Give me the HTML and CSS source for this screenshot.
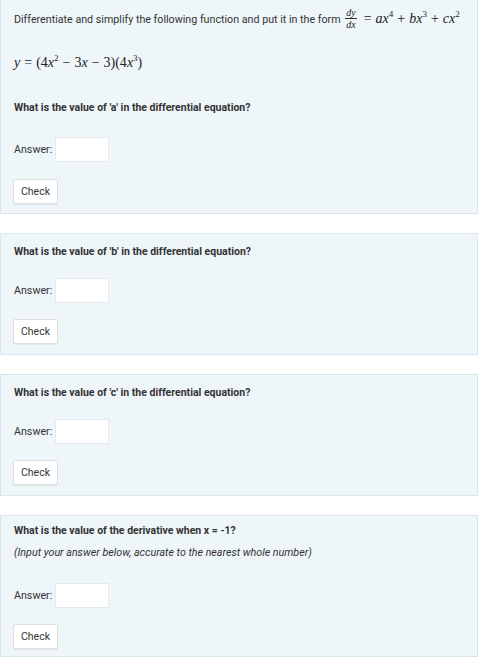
FILE: index.html
```html
<!DOCTYPE html>
<html>
<head>
<meta charset="utf-8">
<link rel="stylesheet" href="styles.css">
</head>
<body>
<div class="panel first">
  <p class="intro">Differentiate and simplify the following function and put it in the form
    <span class="math"><span class="frac"><span class="num"><i>dy</i></span><span class="den"><i>dx</i></span></span><span class="op eq">=</span><i>ax</i><sup>4</sup><span class="op">+</span><i>bx</i><sup>3</sup><span class="op">+</span><i>cx</i><sup>2</sup></span>
  </p>
  <p class="equation"><span class="math"><i>y</i><span class="op">=</span>(4<i>x</i><sup>2</sup><span class="op">−</span>3<i>x</i><span class="op">−</span>3)(4<i>x</i><sup>3</sup>)</span></p>
  <p class="question">What is the value of 'a' in the differential equation?</p>
  <div class="answer-row"><span class="label">Answer:</span><span class="input"></span></div>
  <button class="check">Check</button>
</div>
<div class="panel">
  <p class="question">What is the value of 'b' in the differential equation?</p>
  <div class="answer-row"><span class="label">Answer:</span><span class="input"></span></div>
  <button class="check">Check</button>
</div>
<div class="panel">
  <p class="question">What is the value of 'c' in the differential equation?</p>
  <div class="answer-row"><span class="label">Answer:</span><span class="input"></span></div>
  <button class="check">Check</button>
</div>
<div class="panel last">
  <p class="question">What is the value of the derivative when x = -1?</p>
  <p class="note">(Input your answer below, accurate to the nearest whole number)</p>
  <div class="answer-row"><span class="label">Answer:</span><span class="input"></span></div>
  <button class="check">Check</button>
</div>
</body>
</html>
```

FILE: styles.css
```css
body {
  margin: 0;
  background: #ffffff;
  font-family: Roboto, "Liberation Sans", sans-serif;
  font-size: 10.7px;
  color: #333333;
}
.panel {
  width: 451px;
  background: #eef6f9;
  border: 1px solid #d8e7ed;
  padding: 9px 12px 10px 13px;
  margin-bottom: 19px;
  display: flex;
  flex-direction: column;
  align-items: flex-start;
}
.panel.first {
  border-top: none;
  padding-top: 6px;
  padding-bottom: 9px;
}
p { margin: 0; }
.intro {
  line-height: 26px;
  height: 26px;
  white-space: nowrap;
}
.equation {
  margin-top: 21px;
  line-height: 20px;
}
.first .question { margin-top: 25px; }
.first .answer-row { margin-top: 20px; }
.first .check { margin-top: 17px; }
.question {
  font-weight: bold;
  font-size: 10.5px;
  line-height: 18px;
}
.note {
  font-style: italic;
  line-height: 18px;
  margin-top: 4px;
}
.math {
  font-family: "Liberation Serif", "DejaVu Serif", serif;
  font-size: 14px;
  color: #222;
}
.math i { font-style: italic; }
.math sup { font-size: 9px; vertical-align: 6px; line-height: 0; }
.op { margin: 0 4px; }
.op.eq { margin-left: 7px; }
.frac {
  display: inline-flex;
  flex-direction: column;
  align-items: center;
  vertical-align: middle;
  font-size: 10px;
  line-height: 9px;
  margin-left: 2px;
  position: relative;
  top: -1px;
}
.frac .num { border-bottom: 1px solid #333; padding: 0 1px 1px; }
.frac .den { padding-top: 1px; }
.answer-row {
  margin-top: 17px;
  height: 25px;
  display: flex;
  align-items: center;
  gap: 3px;
}
.label { line-height: 25px; }
.input {
  width: 52px;
  height: 23px;
  background: #ffffff;
  border: 1px solid #e2eaee;
  display: inline-block;
}
.check {
  margin-top: 16px;
  margin-left: -1px;
  height: 25px;
  width: 45px;
  padding: 0;
  background: #ffffff;
  border: 1px solid #dedede;
  border-radius: 2px;
  box-shadow: 0 1px 1px rgba(0,0,0,0.06);
  font-family: Roboto, "Liberation Sans", sans-serif;
  font-size: 10.5px;
  color: #333;
}
.last { padding-top: 6px; padding-bottom: 7px; }
.last .answer-row { margin-top: 21px; }
```
